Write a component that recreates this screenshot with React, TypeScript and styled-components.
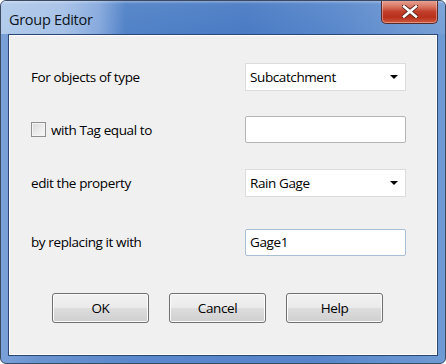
import React from "react";
import styled, { createGlobalStyle } from "styled-components";

const GlobalStyle = createGlobalStyle`
  html, body {
    margin: 0;
    padding: 0;
    background: #ffffff;
  }
  body {
    font-family: "Open Sans", "Noto Sans", sans-serif;
  }
`;

const Window = styled.div`
  width: 446px;
  height: 364px;
  box-sizing: border-box;
  display: flex;
  flex-direction: column;
  border: 1px solid #3b4a60;
  border-radius: 6px;
  background: linear-gradient(to right, #7aa0d8 0%, #6a94d0 8%, #5a88cc 30%, #5685ca 70%, #6e9ad4 100%);
  overflow: hidden;
`;

const TitleBar = styled.div`
  height: 33px;
  flex: none;
  display: flex;
  align-items: flex-start;
  background:
    linear-gradient(to bottom, rgba(255, 255, 255, 0.35) 0, rgba(255, 255, 255, 0.05) 3px, rgba(255, 255, 255, 0) 33px),
    linear-gradient(to right, #b2cbeb 0%, #a6c1e7 14%, #86a9dd 22%, #5182c7 28%, #4a7bc4 55%, #5887cb 75%, #78a0d6 100%);
`;

const Title = styled.div`
  padding: 9px 0 0 8px;
  font-size: 14.5px;
  line-height: 20px;
  color: #0c1420;
  letter-spacing: -0.3px;
`;

const CloseButton = styled.div`
  margin-left: auto;
  margin-right: 7px;
  margin-top: -1px;
  width: 57px;
  height: 24px;
  box-sizing: border-box;
  border: 1px solid #5a2a2a;
  border-top: none;
  border-radius: 0 0 5px 5px;
  background: linear-gradient(to bottom, #e8a99a 0%, #d8735f 30%, #c2402b 50%, #b8301c 75%, #d05a40 100%);
  display: flex;
  align-items: center;
  justify-content: center;
  box-shadow: inset 0 0 0 1px rgba(255, 255, 255, 0.35);
`;

const Client = styled.div`
  flex: 1;
  margin: 0 7px 7px 7px;
  border: 1px solid #2c4673;
  box-shadow: inset 0 0 0 1px #ffffff;
  background: #f0f0f0;
  box-sizing: border-box;
  padding: 28px 0 0 22px;
  display: flex;
  flex-direction: column;
`;

const Row = styled.div<{ $top: number; $h: number }>`
  display: grid;
  grid-template-columns: 214px 161px;
  align-items: center;
  height: ${(p) => p.$h}px;
  margin-top: ${(p) => p.$top}px;
`;

const Label = styled.label`
  display: flex;
  align-items: center;
  font-size: 13.5px;
  color: #000000;
  letter-spacing: -0.4px;
`;

const CheckBox = styled.span`
  width: 13px;
  height: 13px;
  margin-right: 5px;
  border: 1px solid #8e8f8f;
  background: linear-gradient(135deg, #d9d9d9 0%, #ededed 60%, #f8f8f8 100%);
  box-shadow: inset 0 0 0 1px #f4f4f4;
`;

const Combo = styled.div`
  height: 28px;
  box-sizing: border-box;
  border: 1px solid #dcdcdc;
  background: #ffffff;
  display: flex;
  align-items: center;
  padding: 0 4px 0 4px;
  font-size: 13.5px;
  letter-spacing: -0.4px;
  color: #000000;
`;

const Arrow = styled.span`
  margin-left: auto;
  margin-right: 3px;
  width: 0;
  height: 0;
  border-left: 4px solid transparent;
  border-right: 4px solid transparent;
  border-top: 4px solid #000000;
`;

const Edit = styled.div<{ $focus?: boolean }>`
  height: 27px;
  box-sizing: border-box;
  border: 1px solid ${(p) => (p.$focus ? "#a9bfd6" : "#b5b5b5")};
  border-radius: 2px;
  background: #ffffff;
  display: flex;
  align-items: center;
  padding: 0 4px;
  font-size: 13.5px;
  letter-spacing: -0.4px;
  color: #000000;
`;

const ButtonRow = styled.div`
  display: flex;
  gap: 20px;
  margin-top: 37px;
  padding-left: 21px;
`;

const Button = styled.div`
  width: 97px;
  height: 30px;
  box-sizing: border-box;
  border: 1px solid #707070;
  border-radius: 3px;
  background: linear-gradient(to bottom, #f2f2f2 0%, #ebebeb 48%, #dddddd 52%, #cfcfcf 100%);
  box-shadow: inset 0 0 0 1px #fbfbfb;
  display: flex;
  align-items: center;
  justify-content: center;
  font-size: 13.5px;
  letter-spacing: -0.4px;
  color: #000000;
`;

export default function App() {
  return (
    <>
      <GlobalStyle />
      <Window>
        <TitleBar>
          <Title>Group Editor</Title>
          <CloseButton>
            <svg width="16" height="13" viewBox="0 0 16 13">
              <path d="M2 1.5 L14 11.5 M14 1.5 L2 11.5" stroke="#4a1a14" strokeWidth="4.2" strokeLinecap="square" />
              <path d="M2 1.5 L14 11.5 M14 1.5 L2 11.5" stroke="#ffffff" strokeWidth="2.6" strokeLinecap="square" />
            </svg>
          </CloseButton>
        </TitleBar>
        <Client>
          <Row $top={0} $h={28}>
            <Label>For objects of type</Label>
            <Combo>
              Subcatchment
              <Arrow />
            </Combo>
          </Row>
          <Row $top={25} $h={27}>
            <Label>
              <CheckBox />
              with Tag equal to
            </Label>
            <Edit />
          </Row>
          <Row $top={26} $h={28}>
            <Label>edit the property</Label>
            <Combo>
              Rain Gage
              <Arrow />
            </Combo>
          </Row>
          <Row $top={31} $h={28}>
            <Label>by replacing it with</Label>
            <Edit $focus>Gage1</Edit>
          </Row>
          <ButtonRow>
            <Button>OK</Button>
            <Button>Cancel</Button>
            <Button>Help</Button>
          </ButtonRow>
        </Client>
      </Window>
    </>
  );
}
